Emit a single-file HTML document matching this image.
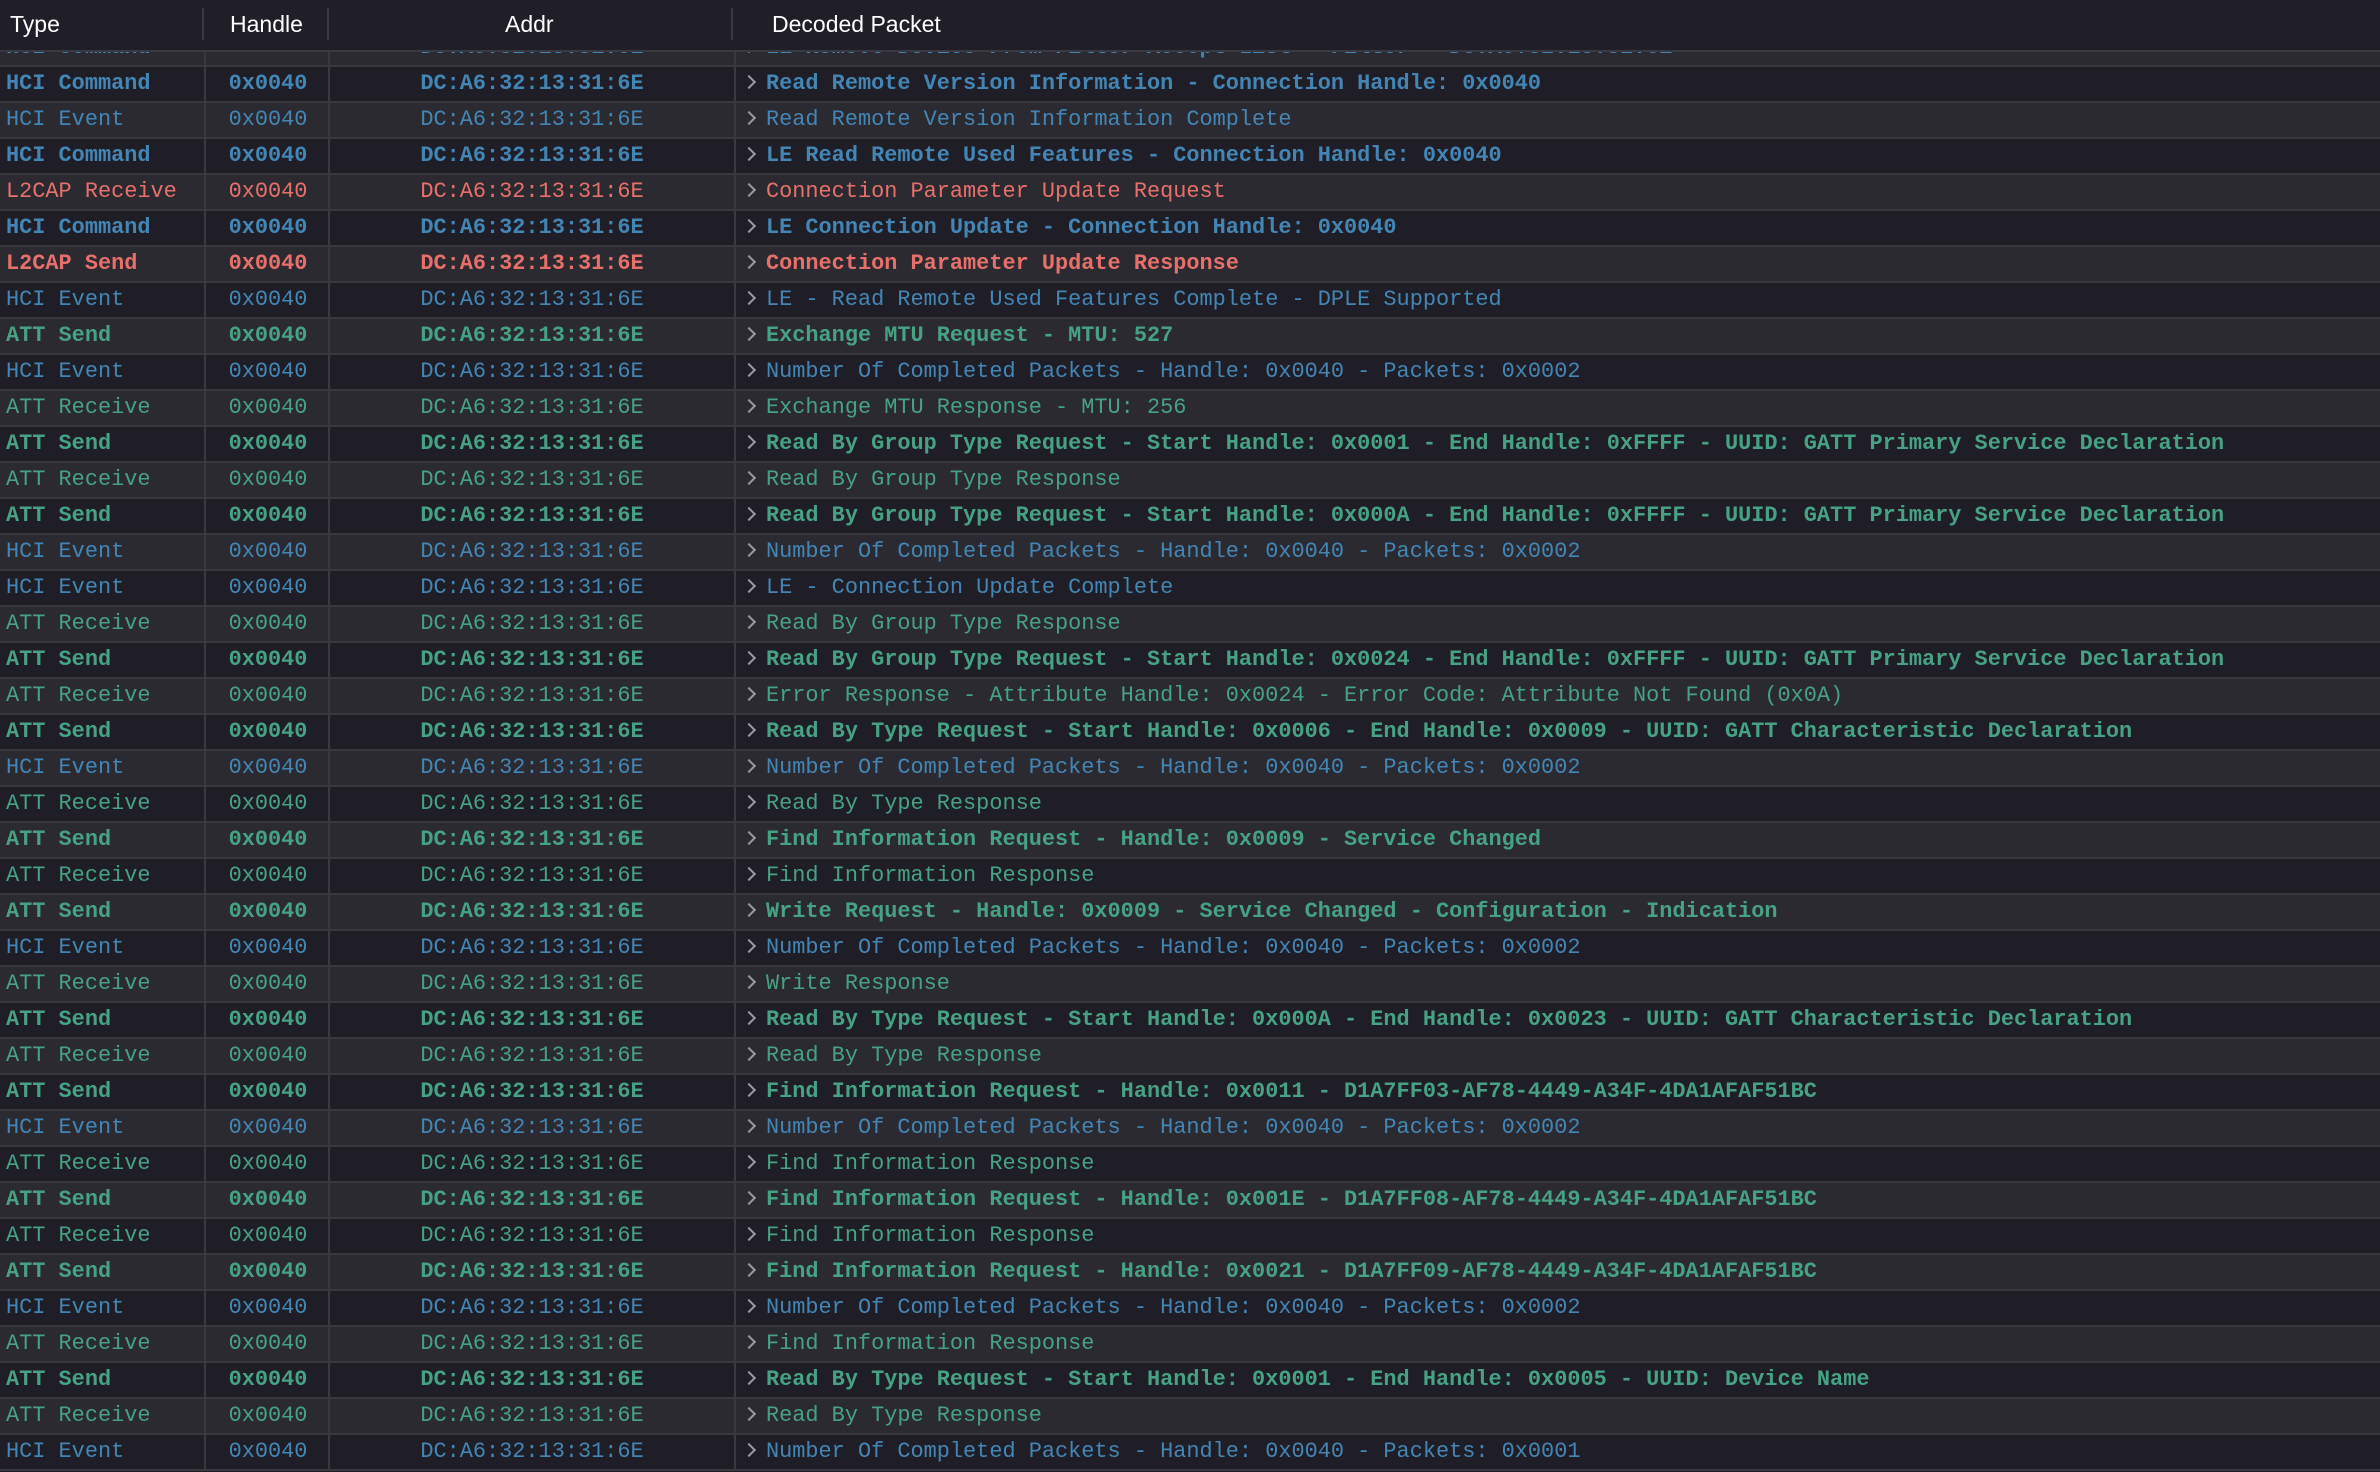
<!DOCTYPE html>
<html><head><meta charset="utf-8"><style>
html,body{margin:0;padding:0;background:#1f1e26;width:2380px;height:1472px;overflow:hidden}
.hdr{position:absolute;left:0;top:0;width:2380px;height:50px;background:#201f27;border-bottom:2px solid #3a393f;font-family:"Liberation Sans",sans-serif;font-size:23px;color:#fff}
.hdr span{position:absolute;top:11px}
.hdr i{position:absolute;top:8px;height:32px;width:2px;background:#3a393f}
.body{position:absolute;left:0;top:52px;width:2380px;height:1420px;overflow:hidden}
.in{position:absolute;left:0;top:-21px;width:2380px}
.r{position:relative;height:34px;border-bottom:2px solid #39383d;font-family:"Liberation Mono",monospace;font-size:21.9px;line-height:34px;white-space:nowrap}
.r:nth-child(odd){background:#2b2a31}
.r:nth-child(even){background:#1f1e26}
.r div{position:absolute;top:0;height:34px}
.t{left:6px}
.h{left:204px;width:124px;text-align:center;border-left:2px solid #39383d}
.a{left:328px;width:404px;text-align:center;border-left:2px solid #39383d;border-right:2px solid #39383d}
.d{left:744px}
.d:before{content:"";display:inline-block;width:8px;height:8px;border-top:2px solid #9a99a0;border-right:2px solid #9a99a0;transform:rotate(45deg);margin:0 12px 3px 0;vertical-align:middle}
.b{font-weight:bold}
.bl{color:#4386b5}.rd{color:#e8706b}.gr{color:#46a283}
</style></head><body>
<div class="hdr"><span style="left:10px">Type</span><i style="left:202px"></i><span style="left:230px">Handle</span><i style="left:327px"></i><span style="left:505px">Addr</span><i style="left:731px"></i><span style="left:772px">Decoded Packet</span></div>
<div class="body"><div class="in">
<div class="r bl b"><div class="t">HCI Command</div><div class="h"></div><div class="a">DC:A6:32:13:31:6E</div><div class="d">LE Remove Device From Filter Accept List - Filter - DC:A6:32:13:31:6E</div></div>
<div class="r bl b"><div class="t">HCI Command</div><div class="h">0x0040</div><div class="a">DC:A6:32:13:31:6E</div><div class="d">Read Remote Version Information - Connection Handle: 0x0040</div></div>
<div class="r bl"><div class="t">HCI Event</div><div class="h">0x0040</div><div class="a">DC:A6:32:13:31:6E</div><div class="d">Read Remote Version Information Complete</div></div>
<div class="r bl b"><div class="t">HCI Command</div><div class="h">0x0040</div><div class="a">DC:A6:32:13:31:6E</div><div class="d">LE Read Remote Used Features - Connection Handle: 0x0040</div></div>
<div class="r rd"><div class="t">L2CAP Receive</div><div class="h">0x0040</div><div class="a">DC:A6:32:13:31:6E</div><div class="d">Connection Parameter Update Request</div></div>
<div class="r bl b"><div class="t">HCI Command</div><div class="h">0x0040</div><div class="a">DC:A6:32:13:31:6E</div><div class="d">LE Connection Update - Connection Handle: 0x0040</div></div>
<div class="r rd b"><div class="t">L2CAP Send</div><div class="h">0x0040</div><div class="a">DC:A6:32:13:31:6E</div><div class="d">Connection Parameter Update Response</div></div>
<div class="r bl"><div class="t">HCI Event</div><div class="h">0x0040</div><div class="a">DC:A6:32:13:31:6E</div><div class="d">LE - Read Remote Used Features Complete - DPLE Supported</div></div>
<div class="r gr b"><div class="t">ATT Send</div><div class="h">0x0040</div><div class="a">DC:A6:32:13:31:6E</div><div class="d">Exchange MTU Request - MTU: 527</div></div>
<div class="r bl"><div class="t">HCI Event</div><div class="h">0x0040</div><div class="a">DC:A6:32:13:31:6E</div><div class="d">Number Of Completed Packets - Handle: 0x0040 - Packets: 0x0002</div></div>
<div class="r gr"><div class="t">ATT Receive</div><div class="h">0x0040</div><div class="a">DC:A6:32:13:31:6E</div><div class="d">Exchange MTU Response - MTU: 256</div></div>
<div class="r gr b"><div class="t">ATT Send</div><div class="h">0x0040</div><div class="a">DC:A6:32:13:31:6E</div><div class="d">Read By Group Type Request - Start Handle: 0x0001 - End Handle: 0xFFFF - UUID: GATT Primary Service Declaration</div></div>
<div class="r gr"><div class="t">ATT Receive</div><div class="h">0x0040</div><div class="a">DC:A6:32:13:31:6E</div><div class="d">Read By Group Type Response</div></div>
<div class="r gr b"><div class="t">ATT Send</div><div class="h">0x0040</div><div class="a">DC:A6:32:13:31:6E</div><div class="d">Read By Group Type Request - Start Handle: 0x000A - End Handle: 0xFFFF - UUID: GATT Primary Service Declaration</div></div>
<div class="r bl"><div class="t">HCI Event</div><div class="h">0x0040</div><div class="a">DC:A6:32:13:31:6E</div><div class="d">Number Of Completed Packets - Handle: 0x0040 - Packets: 0x0002</div></div>
<div class="r bl"><div class="t">HCI Event</div><div class="h">0x0040</div><div class="a">DC:A6:32:13:31:6E</div><div class="d">LE - Connection Update Complete</div></div>
<div class="r gr"><div class="t">ATT Receive</div><div class="h">0x0040</div><div class="a">DC:A6:32:13:31:6E</div><div class="d">Read By Group Type Response</div></div>
<div class="r gr b"><div class="t">ATT Send</div><div class="h">0x0040</div><div class="a">DC:A6:32:13:31:6E</div><div class="d">Read By Group Type Request - Start Handle: 0x0024 - End Handle: 0xFFFF - UUID: GATT Primary Service Declaration</div></div>
<div class="r gr"><div class="t">ATT Receive</div><div class="h">0x0040</div><div class="a">DC:A6:32:13:31:6E</div><div class="d">Error Response - Attribute Handle: 0x0024 - Error Code: Attribute Not Found (0x0A)</div></div>
<div class="r gr b"><div class="t">ATT Send</div><div class="h">0x0040</div><div class="a">DC:A6:32:13:31:6E</div><div class="d">Read By Type Request - Start Handle: 0x0006 - End Handle: 0x0009 - UUID: GATT Characteristic Declaration</div></div>
<div class="r bl"><div class="t">HCI Event</div><div class="h">0x0040</div><div class="a">DC:A6:32:13:31:6E</div><div class="d">Number Of Completed Packets - Handle: 0x0040 - Packets: 0x0002</div></div>
<div class="r gr"><div class="t">ATT Receive</div><div class="h">0x0040</div><div class="a">DC:A6:32:13:31:6E</div><div class="d">Read By Type Response</div></div>
<div class="r gr b"><div class="t">ATT Send</div><div class="h">0x0040</div><div class="a">DC:A6:32:13:31:6E</div><div class="d">Find Information Request - Handle: 0x0009 - Service Changed</div></div>
<div class="r gr"><div class="t">ATT Receive</div><div class="h">0x0040</div><div class="a">DC:A6:32:13:31:6E</div><div class="d">Find Information Response</div></div>
<div class="r gr b"><div class="t">ATT Send</div><div class="h">0x0040</div><div class="a">DC:A6:32:13:31:6E</div><div class="d">Write Request - Handle: 0x0009 - Service Changed - Configuration - Indication</div></div>
<div class="r bl"><div class="t">HCI Event</div><div class="h">0x0040</div><div class="a">DC:A6:32:13:31:6E</div><div class="d">Number Of Completed Packets - Handle: 0x0040 - Packets: 0x0002</div></div>
<div class="r gr"><div class="t">ATT Receive</div><div class="h">0x0040</div><div class="a">DC:A6:32:13:31:6E</div><div class="d">Write Response</div></div>
<div class="r gr b"><div class="t">ATT Send</div><div class="h">0x0040</div><div class="a">DC:A6:32:13:31:6E</div><div class="d">Read By Type Request - Start Handle: 0x000A - End Handle: 0x0023 - UUID: GATT Characteristic Declaration</div></div>
<div class="r gr"><div class="t">ATT Receive</div><div class="h">0x0040</div><div class="a">DC:A6:32:13:31:6E</div><div class="d">Read By Type Response</div></div>
<div class="r gr b"><div class="t">ATT Send</div><div class="h">0x0040</div><div class="a">DC:A6:32:13:31:6E</div><div class="d">Find Information Request - Handle: 0x0011 - D1A7FF03-AF78-4449-A34F-4DA1AFAF51BC</div></div>
<div class="r bl"><div class="t">HCI Event</div><div class="h">0x0040</div><div class="a">DC:A6:32:13:31:6E</div><div class="d">Number Of Completed Packets - Handle: 0x0040 - Packets: 0x0002</div></div>
<div class="r gr"><div class="t">ATT Receive</div><div class="h">0x0040</div><div class="a">DC:A6:32:13:31:6E</div><div class="d">Find Information Response</div></div>
<div class="r gr b"><div class="t">ATT Send</div><div class="h">0x0040</div><div class="a">DC:A6:32:13:31:6E</div><div class="d">Find Information Request - Handle: 0x001E - D1A7FF08-AF78-4449-A34F-4DA1AFAF51BC</div></div>
<div class="r gr"><div class="t">ATT Receive</div><div class="h">0x0040</div><div class="a">DC:A6:32:13:31:6E</div><div class="d">Find Information Response</div></div>
<div class="r gr b"><div class="t">ATT Send</div><div class="h">0x0040</div><div class="a">DC:A6:32:13:31:6E</div><div class="d">Find Information Request - Handle: 0x0021 - D1A7FF09-AF78-4449-A34F-4DA1AFAF51BC</div></div>
<div class="r bl"><div class="t">HCI Event</div><div class="h">0x0040</div><div class="a">DC:A6:32:13:31:6E</div><div class="d">Number Of Completed Packets - Handle: 0x0040 - Packets: 0x0002</div></div>
<div class="r gr"><div class="t">ATT Receive</div><div class="h">0x0040</div><div class="a">DC:A6:32:13:31:6E</div><div class="d">Find Information Response</div></div>
<div class="r gr b"><div class="t">ATT Send</div><div class="h">0x0040</div><div class="a">DC:A6:32:13:31:6E</div><div class="d">Read By Type Request - Start Handle: 0x0001 - End Handle: 0x0005 - UUID: Device Name</div></div>
<div class="r gr"><div class="t">ATT Receive</div><div class="h">0x0040</div><div class="a">DC:A6:32:13:31:6E</div><div class="d">Read By Type Response</div></div>
<div class="r bl"><div class="t">HCI Event</div><div class="h">0x0040</div><div class="a">DC:A6:32:13:31:6E</div><div class="d">Number Of Completed Packets - Handle: 0x0040 - Packets: 0x0001</div></div>
</div></div>
</body></html>
